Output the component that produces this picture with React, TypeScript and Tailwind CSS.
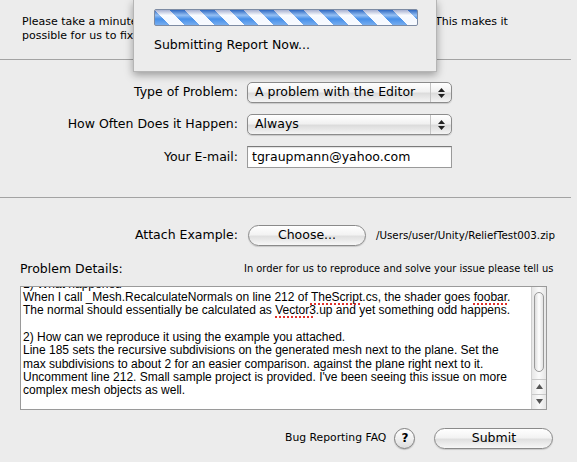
import React from "react";

const ui = "font-['DejaVu_Sans','Liberation_Sans',sans-serif]";

function Popup({ value }: { value: string }) {
  return (
    <div className="flex h-[21px] w-[205px] items-stretch rounded-[5px] border border-[#8c8c8c] bg-[linear-gradient(#ffffff,#f1f1f1_45%,#dcdcdc_55%,#f4f4f4)] shadow-[0_1px_1px_rgba(0,0,0,0.15)]">
      <div className="flex flex-1 items-center pl-[7px] text-[12.5px] text-black">{value}</div>
      <div className="flex w-[21px] flex-col items-center justify-center border-l border-[#c4c4c4] gap-[2px]">
        <svg width="7" height="4" viewBox="0 0 7 4"><path d="M3.5 0L7 4H0z" fill="#222" /></svg>
        <svg width="7" height="4" viewBox="0 0 7 4"><path d="M0 0H7L3.5 4z" fill="#222" /></svg>
      </div>
    </div>
  );
}

function Pill({ label, w }: { label: string; w: string }) {
  return (
    <div
      className={`flex h-[21px] ${w} items-center justify-center rounded-full border border-[#8a8a8a] bg-[linear-gradient(#ffffff,#f3f3f3_45%,#e0e0e0_55%,#f7f7f7)] text-[12.5px] text-black shadow-[0_1px_1px_rgba(0,0,0,0.15)]`}
    >
      {label}
    </div>
  );
}

const Typo = ({ children }: { children: React.ReactNode }) => (
  <span className="underline decoration-dotted decoration-[#e0302a] decoration-[1.5px] underline-offset-[2px]">{children}</span>
);

export default function App() {
  return (
    <div className={`relative h-[462px] w-[577px] overflow-hidden bg-[#ececec] text-black ${ui}`}>
      {/* intro text */}
      <div className="h-[59px] pl-[22px] pt-[15px] text-[11px] leading-[14px]">
        <div className="flex whitespace-nowrap">
          <span className="inline-block w-[413px] overflow-hidden">
            Please take a minute to describe the problem you have run into below as best you can.
          </span>
          <span>This makes it</span>
        </div>
        <div className="whitespace-nowrap">possible for us to fix the problem as quickly as possible.</div>
      </div>
      <div className="mr-[6px] h-px bg-[#a3a3a3]" />

      {/* form rows */}
      <div className="mt-[22px] grid grid-cols-[238px_auto] items-center gap-x-[9px] gap-y-[11px] text-[12.5px]">
        <div className="text-right">Type of Problem:</div>
        <Popup value="A problem with the Editor" />
        <div className="text-right">How Often Does it Happen:</div>
        <Popup value="Always" />
        <div className="text-right">Your E-mail:</div>
        <div className="flex h-[22px] w-[205px] items-center border border-[#9a9a9a] border-t-[#7a7a7a] bg-white pl-[4px] shadow-[inset_0_1px_1px_rgba(0,0,0,0.12)]">
          tgraupmann@yahoo.com
        </div>
      </div>

      <div className="mr-[6px] mt-[29px] h-px bg-[#a3a3a3]" />

      {/* attach row */}
      <div className="mt-[27px] flex items-center text-[12.5px]">
        <div className="w-[238px] text-right">Attach Example:</div>
        <div className="ml-[10px]">
          <Pill label="Choose..." w="w-[118px]" />
        </div>
        <div className="ml-[10px] text-[10.3px]">/Users/user/Unity/ReliefTest003.zip</div>
      </div>

      {/* problem details header */}
      <div className="mt-[14px] flex items-center pl-[20px]">
        <div className="w-[224px] text-[12.5px]">Problem Details:</div>
        <div className="whitespace-nowrap text-[9.9px]">In order for us to reproduce and solve your issue please tell us</div>
      </div>

      {/* text area */}
      <div className="ml-[20px] mt-[7px] flex h-[124px] w-[527px] border border-[#9a9a9a] bg-white">
        <div className="flex-1 overflow-hidden pl-[2px] font-['Liberation_Sans',Arial,sans-serif] text-[12px] leading-[13.3px]">
          <div className="-mt-[9px]">
            <div>1) What happened</div>
            <div className="whitespace-nowrap">
              When I call _Mesh.RecalculateNormals on line 212 of <Typo>TheScript</Typo>.cs, the shader goes <Typo>foobar</Typo>.
            </div>
            <div className="whitespace-nowrap">
              The normal should essentially be calculated as <Typo>Vector3</Typo>.up and yet something odd happens.
            </div>
            <div className="h-[13.3px]" />
            <div className="whitespace-nowrap">2) How can we reproduce it using the example you attached.</div>
            <div className="whitespace-nowrap">
              Line 185 sets the recursive subdivisions on the generated mesh next to the plane. Set the
            </div>
            <div className="whitespace-nowrap">
              max subdivisions to about 2 for an easier comparison. against the plane right next to it.
            </div>
            <div className="whitespace-nowrap">
              Uncomment line 212. Small sample project is provided. I've been seeing this issue on more
            </div>
            <div className="whitespace-nowrap">complex mesh objects as well.</div>
          </div>
        </div>
        {/* scrollbar */}
        <div className="flex w-[15px] flex-col border-l border-[#d0d0d0] bg-[linear-gradient(90deg,#e6e6e6,#fafafa_50%,#e6e6e6)]">
          <div className="flex-1 px-[2px] pt-[5px] pb-[2px]">
            <div className="h-[80px] rounded-full border border-[#9a9a9a] bg-[linear-gradient(90deg,#dcdcdc,#ffffff_50%,#e2e2e2)]" />
          </div>
          <div className="flex h-[15px] items-center justify-center border-t border-[#c8c8c8]">
            <svg width="7" height="5" viewBox="0 0 7 5"><path d="M3.5 0L7 5H0z" fill="#555" /></svg>
          </div>
          <div className="flex h-[15px] items-center justify-center border-t border-[#c8c8c8]">
            <svg width="7" height="5" viewBox="0 0 7 5"><path d="M0 0H7L3.5 5z" fill="#555" /></svg>
          </div>
        </div>
      </div>

      {/* bottom row */}
      <div className="mt-[18px] flex items-center pl-[285px]">
        <div className="text-[10.8px]">Bug Reporting FAQ</div>
        <div className="ml-[8px] flex h-[21px] w-[21px] items-center justify-center rounded-full border border-[#7f7f7f] bg-[linear-gradient(#ffffff,#f0f0f0_50%,#dcdcdc)] text-[12px] font-bold shadow-[0_1px_1px_rgba(0,0,0,0.2)]">
          ?
        </div>
        <div className="ml-[19px]">
          <Pill label="Submit" w="w-[119px]" />
        </div>
      </div>

      {/* progress sheet overlay */}
      <div className="absolute left-[133px] top-0 h-[72px] w-[304px] border-x border-b border-[#b5b5b5] bg-[#ececec] shadow-[0_3px_8px_rgba(0,0,0,0.35)]">
        <div className="absolute left-[20px] top-[9px] h-[17px] w-[264px] overflow-hidden rounded-[2px] border border-[#7d8ba3] bg-[repeating-linear-gradient(45deg,#3d8ae8_0px,#3d8ae8_10.5px,#f4f8ff_10.5px,#f4f8ff_21px)]">
          <div className="h-full w-full bg-[linear-gradient(rgba(20,40,120,0.35),rgba(255,255,255,0.45)_35%,rgba(255,255,255,0.05)_60%,rgba(255,255,255,0.3))]" />
        </div>
        <div className="absolute left-[20px] top-[36px] text-[12.5px]">Submitting Report Now...</div>
      </div>
    </div>
  );
}
